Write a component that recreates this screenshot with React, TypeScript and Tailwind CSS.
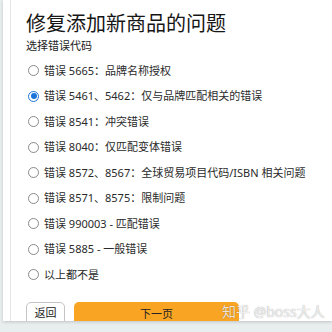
const options = [
  { id: "5665", label: "错误 5665：品牌名称授权" },
  { id: "5461", label: "错误 5461、5462：仅与品牌匹配相关的错误" },
  { id: "8541", label: "错误 8541：冲突错误" },
  { id: "8040", label: "错误 8040：仅匹配变体错误" },
  { id: "8572", label: "错误 8572、8567：全球贸易项目代码/ISBN 相关问题" },
  { id: "8571", label: "错误 8571、8575：限制问题" },
  { id: "990003", label: "错误 990003 - 匹配错误" },
  { id: "5885", label: "错误 5885 - 一般错误" },
  { id: "none", label: "以上都不是" },
];

function Radio({ checked }: { checked: boolean }) {
  if (checked) {
    return (
      <span className="flex h-[11px] w-[11px] shrink-0 items-center justify-center rounded-full border border-[#1a73d9] bg-white">
        <span className="h-[6px] w-[6px] rounded-full bg-[#1a73d9]" />
      </span>
    );
  }
  return <span className="h-[11px] w-[11px] shrink-0 rounded-full border border-[#8a8a8a] bg-white" />;
}

export default function App() {
  const font = { fontFamily: '"Noto Sans", "Noto Sans CJK SC", sans-serif' };

  return (
    <div className="h-[332px] w-[332px] overflow-hidden bg-[#e8edee] pl-[3px]" style={font}>
      <div className="relative h-[321px] overflow-hidden bg-white pl-[7px] shadow-[0_1px_3px_rgba(0,0,0,0.18)]">
        <div className="h-full border-l border-[#e2e6e6] pl-[15px] pt-[9px]">
          <h1 className="text-[20px] leading-[30px] text-[#161616]">修复添加新商品的问题</h1>
          <p className="text-[11px] leading-[14px] text-[#222]">选择错误代码</p>

          <div className="mt-[5px] flex flex-col">
            {options.map((o) => (
              <label key={o.id} className="flex h-[25.5px] items-center gap-[5px] pl-[2px] text-[11px] text-[#2a2a2a]">
                <Radio checked={o.id === "5461"} />
                <span className="whitespace-nowrap">{o.label}</span>
              </label>
            ))}
          </div>

          <div className="mt-[14px] flex gap-[9px]">
            <button className="h-[28px] w-[39px] rounded-[5px] border border-[#c4c4c4] bg-white pb-[5px] text-[11px] text-[#222]">
              返回
            </button>
            <button className="h-[28px] w-[165px] rounded-[5px] bg-[#f9a523] pb-[2px] text-[11px] text-[#222]">
              下一页
            </button>
          </div>
        </div>

        <div
          className="absolute left-[219px] top-[303px] whitespace-nowrap text-[14px] leading-[18px] text-[#ffffffd9]"
          style={{ textShadow: "0 0 1px rgba(0,0,0,0.45)" }}
        >
          知乎 @boss大人
        </div>
      </div>
    </div>
  );
}
